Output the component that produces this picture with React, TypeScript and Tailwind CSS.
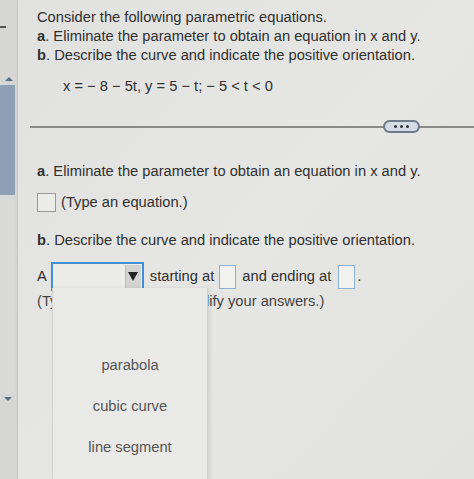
import React from "react";

const FONT = "font-['Liberation_Sans',Arial,sans-serif]";

function AnswerBox({ className = "" }: { className?: string }) {
  return (
    <span
      className={`inline-block h-[24px] w-[17px] border border-[#8fb1d4] bg-[#f1f1ef] align-middle ${className}`}
    />
  );
}

function Scrollbar() {
  return (
    <div className="relative flex w-[18px] shrink-0 flex-col border-r border-[#c4c4c2] bg-[#d6d6d4]">
      <div className="mt-[26px] h-[2px] w-[6px] bg-[#555]" />
      <div className="mt-[45px] flex h-[12px] items-center justify-center">
        <span className="block h-0 w-0 border-x-[4px] border-b-[4px] border-x-transparent border-b-[#5b6b80]" />
      </div>
      <div className="h-[110px] w-[15px] bg-[#8ea0b5]" />
      <div className="flex-1 w-[15px] bg-[#d9d9d7]" />
      <div className="mb-[74px] flex h-[12px] w-[15px] items-center justify-center">
        <span className="block h-0 w-0 border-x-[4px] border-t-[4px] border-x-transparent border-t-[#5b6b80]" />
      </div>
    </div>
  );
}

function Menu() {
  const items = ["parabola", "cubic curve", "line segment"];
  return (
    <div className="absolute left-[34px] top-[288px] h-[200px] w-[156px] border-l border-r border-[#cfcfcd] bg-[#e9e9e7] shadow-[2px_0_4px_rgba(0,0,0,0.08)]">
      <ul className="flex flex-col items-center gap-[22px] pt-[68px] text-[14.7px] text-[#555]">
        {items.map((item) => (
          <li key={item} className="h-[19px] leading-[19px]">
            {item}
          </li>
        ))}
      </ul>
    </div>
  );
}

export default function App() {
  return (
    <div className={`flex h-[479px] w-[474px] overflow-hidden bg-[#e0e0de] ${FONT} text-[14.7px] text-[#303030]`}>
      <Scrollbar />
      <main className="relative flex-1 bg-gradient-to-br from-[#e1e1df] via-[#e6e6e4] to-[#e2e2e0]">
        <section className="pl-[19px] pt-[8px] leading-[19px]">
          <p>Consider the following parametric equations.</p>
          <p>
            <b className="font-bold">a</b>. Eliminate the parameter to obtain an equation in x and y.
          </p>
          <p>
            <b className="font-bold">b</b>. Describe the curve and indicate the positive orientation.
          </p>
          <p className="mt-[12px] pl-[26px]">x = − 8 − 5t, y = 5 − t; − 5 &lt; t &lt; 0</p>
        </section>

        <div className="relative mt-[30px] ml-[12px] h-[2px] bg-[#8a8a8a]">
          <span className="absolute left-[353px] top-[-6px] flex h-[13px] w-[37px] items-center justify-center gap-[3px] rounded-full border-2 border-[#6f7a88] bg-[#d5dbe4]">
            <span className="h-[3px] w-[3px] rounded-full bg-[#333]" />
            <span className="h-[3px] w-[3px] rounded-full bg-[#333]" />
            <span className="h-[3px] w-[3px] rounded-full bg-[#333]" />
          </span>
        </div>

        <section className="pl-[19px] pt-[34px] leading-[19px]">
          <p>
            <b className="font-bold">a</b>. Eliminate the parameter to obtain an equation in x and y.
          </p>
          <div className="mt-[12px] flex items-center gap-[5px]">
            <span className="inline-block h-[19px] w-[19px] border border-[#999] bg-[#ececea]" />
            <span>(Type an equation.)</span>
          </div>
          <p className="mt-[19px]">
            <b className="font-bold">b</b>. Describe the curve and indicate the positive orientation.
          </p>
          <div className="mt-[12px] flex items-center">
            <span className="mr-[4px]">A</span>
            <span className="flex h-[29px] w-[93px] items-center justify-end border-2 border-[#3f8fd6] bg-[#ececea] pr-[1px]">
              <span className="flex h-[23px] w-[16px] items-center justify-center border-l border-[#bbb] bg-[#d3d3d1]">
                <span className="block h-0 w-0 border-x-[5px] border-t-[9px] border-x-transparent border-t-[#222]" />
              </span>
            </span>
            <span className="ml-[6px]">starting at</span>
            <AnswerBox className="ml-[5px]" />
            <span className="ml-[6px]">and ending at</span>
            <AnswerBox className="ml-[7px]" />
            <span className="ml-[2px]">.</span>
          </div>
          <p className="mt-[1px] text-[#444]">(Type ordered pairs. Simplify your answers.)</p>
        </section>

        <Menu />
      </main>
    </div>
  );
}
